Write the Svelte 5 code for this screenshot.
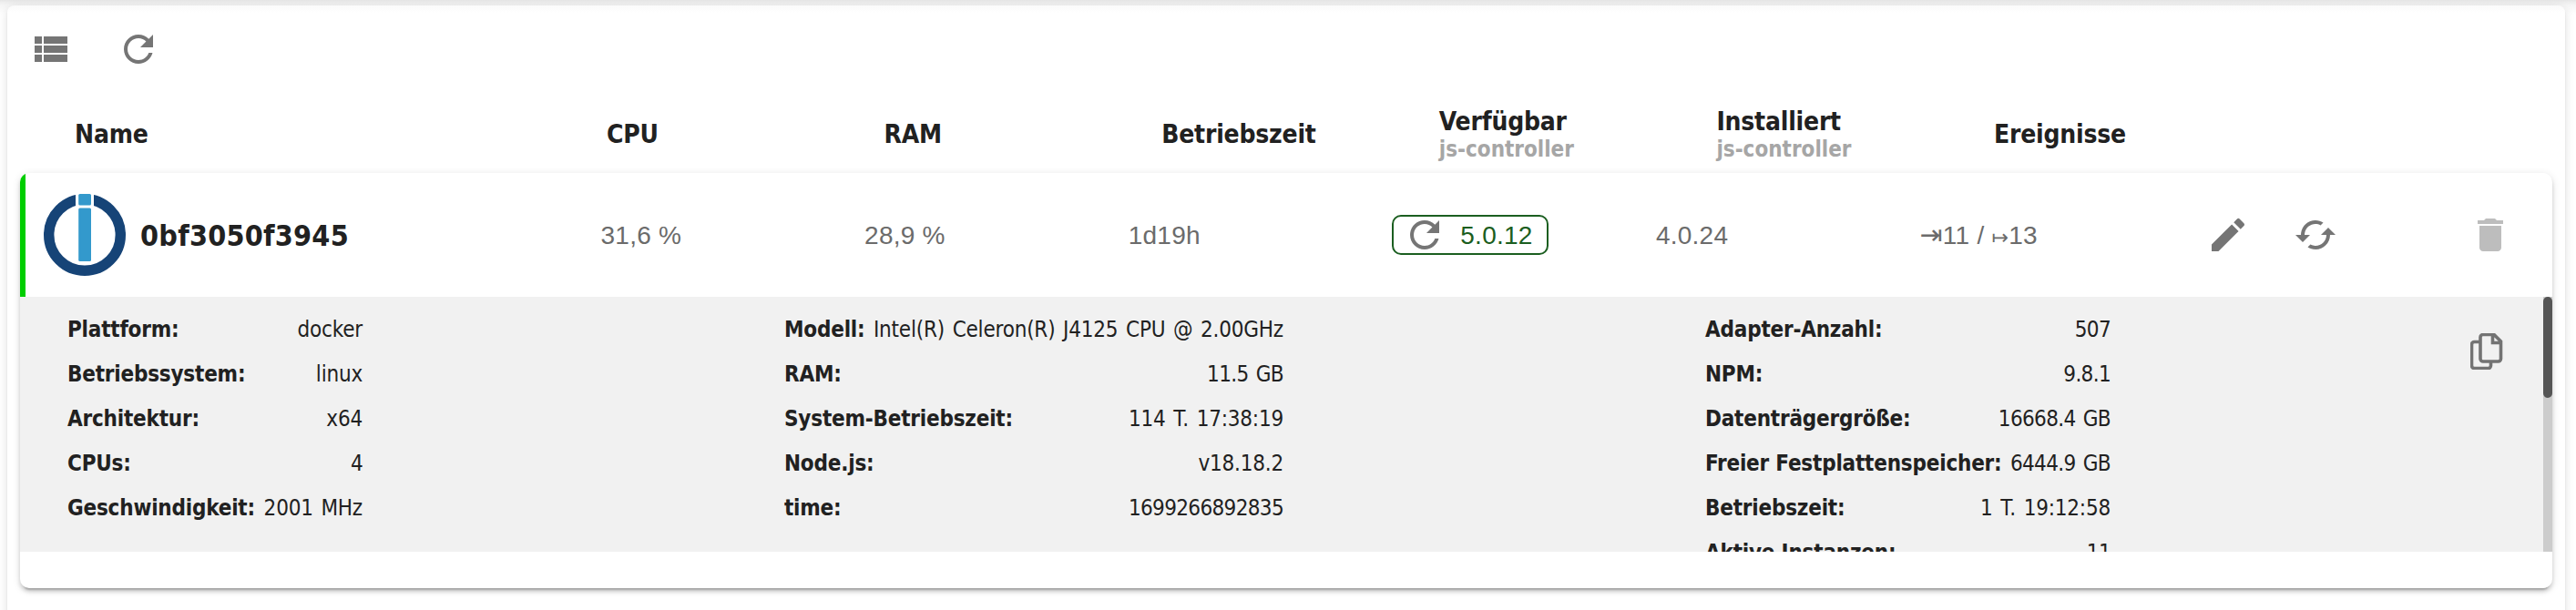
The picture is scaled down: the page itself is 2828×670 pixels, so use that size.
<script>
	const columns = [
		{ title: 'CPU' },
		{ title: 'RAM' },
		{ title: 'Betriebszeit' },
		{ title: 'Verfügbar', sub: 'js-controller' },
		{ title: 'Installiert', sub: 'js-controller' },
		{ title: 'Ereignisse' }
	];

	const host = {
		name: '0bf3050f3945',
		cpu: '31,6 %',
		ram: '28,9 %',
		uptime: '1d19h',
		available: '5.0.12',
		installed: '4.0.24',
		eventsIn: 11,
		eventsOut: 13
	};

	const details = [
		[
			['Plattform', 'docker'],
			['Betriebssystem', 'linux'],
			['Architektur', 'x64'],
			['CPUs', '4'],
			['Geschwindigkeit', '2001 MHz']
		],
		[
			['Modell', 'Intel(R) Celeron(R) J4125 CPU @ 2.00GHz'],
			['RAM', '11.5 GB'],
			['System-Betriebszeit', '114 T. 17:38:19'],
			['Node.js', 'v18.18.2'],
			['time', '1699266892835']
		],
		[
			['Adapter-Anzahl', '507'],
			['NPM', '9.8.1'],
			['Datenträgergröße', '16668.4 GB'],
			['Freier Festplattenspeicher', '6444.9 GB'],
			['Betriebszeit', '1 T. 19:12:58'],
			['Aktive Instanzen', '11']
		]
	];

	const icons = {
		list: 'M3 14h4v-4H3v4zm0 5h4v-4H3v4zM3 9h4V5H3v4zm5 5h13v-4H8v4zm0 5h13v-4H8v4zM8 5v4h13V5H8z',
		refresh:
			'M17.65 6.35C16.2 4.9 14.21 4 12 4c-4.42 0-7.99 3.58-7.99 8s3.57 8 7.99 8c3.73 0 6.84-2.55 7.73-6h-2.08c-.82 2.33-3.04 4-5.65 4-3.31 0-6-2.69-6-6s2.69-6 6-6c1.66 0 3.14.69 4.22 1.78L13 11h7V4l-2.35 2.35z',
		edit: 'M3 17.25V21h3.75L17.81 9.94l-3.75-3.75L3 17.25zM20.71 7.04c.39-.39.39-1.02 0-1.41l-2.34-2.34a.9959.9959 0 0 0-1.41 0l-1.83 1.83 3.75 3.75 1.83-1.83z',
		restart:
			'M19 8l-4 4h3c0 3.31-2.69 6-6 6-1.01 0-1.97-.25-2.8-.7l-1.46 1.46C8.97 19.54 10.43 20 12 20c4.42 0 8-3.58 8-8h3l-4-4zM6 12c0-3.31 2.69-6 6-6 1.01 0 1.97.25 2.8.7l1.46-1.46C15.03 4.46 13.57 4 12 4c-4.42 0-8 3.58-8 8H1l4 4 4-4H6z',
		trash: 'M6 19c0 1.1.9 2 2 2h8c1.1 0 2-.9 2-2V7H6v12zM19 4h-3.5l-1-1h-5l-1 1H5v2h14V4z'
	};

	function isNumeric(v) {
		return /^[\d.]+( GB)?$/.test(v);
	}
</script>

{#snippet icon(name)}
	<svg class="icon" viewBox="0 0 24 24"><path d={icons[name]} /></svg>
{/snippet}

<div class="page">
	<div class="panel">
		<div class="toolbar">
			<button aria-label="list">{@render icon('list')}</button>
			<button aria-label="refresh">{@render icon('refresh')}</button>
		</div>

		<div class="table-head">
			<div class="head-name">Name</div>
			{#each columns as column}
				<div class="head-cell" class:double={column.sub}>
					<div>{column.title}</div>
					{#if column.sub}<div class="sub">{column.sub}</div>{/if}
				</div>
			{/each}
		</div>

		<div class="card">
			<div class="host-row">
				<div class="host-name">
					<svg class="logo" viewBox="0 0 90 90">
						<circle cx="45" cy="45" r="39.3" fill="none" stroke="#164477" stroke-width="11.4" />
						<rect x="35" y="0" width="20" height="20" fill="#fff" />
						<rect x="38.2" y="0" width="13.8" height="12.6" rx="1.5" fill="#3399cc" />
						<rect x="38.2" y="15.4" width="13.8" height="58.6" rx="1.5" fill="#3399cc" />
					</svg>
					<span>{host.name}</span>
				</div>
				<div class="cell">{host.cpu}</div>
				<div class="cell">{host.ram}</div>
				<div class="cell">{host.uptime}</div>
				<div class="cell available">
					<div class="update">{@render icon('refresh')}<span>{host.available}</span></div>
				</div>
				<div class="cell">{host.installed}</div>
				<div class="cell events">
					<span class="in">⇥</span>{host.eventsIn} / <span class="out">↦</span>{host.eventsOut}
				</div>
				<div class="actions">
					<button aria-label="edit">{@render icon('edit')}</button>
					<button aria-label="restart">{@render icon('restart')}</button>
					<button aria-label="delete" class="delete" disabled>{@render icon('trash')}</button>
				</div>
			</div>

			<div class="details">
				{#each details as group}
					<div class="group">
						{#each group as [label, value]}
							<div class="entry">
								<b>{label}:</b>
								<span class:numeric={isNumeric(value)}>{value}</span>
							</div>
						{/each}
					</div>
				{/each}
				<button class="copy" aria-label="copy">
					<svg viewBox="0 0 36 40">
						<path
							d="M11 9.5H4.5a3 3 0 0 0-3 3v23a3 3 0 0 0 3 3h15a3 3 0 0 0 3-3V31M14 1.5h12l7.500 7.500V28a3 3 0 0 1-3 3H14a3 3 0 0 1-3-3V4.500a3 3 0 0 1 3-3zM24.500 2v8.500H33"
						/>
					</svg>
				</button>
				<div class="track"><div class="thumb"></div></div>
			</div>
		</div>
	</div>
</div>

<style>
	:global(body) {
		background: #fff;
		overflow: hidden;
	}

	/* lower edge of the app bar's shadow */
	.page {
		padding-top: 6px;
		background: linear-gradient(#e6e6e6, #ededed 2px, #f6f6f6 6px, #fff 16px);
	}

	.panel {
		box-sizing: border-box;
		height: 690px;
		margin: 0 12px 0 8px;
		padding: 0 14px;
		border-radius: 8px;
		background: linear-gradient(#fafafa, #fff 8px);
		box-shadow:
			0 4px 2px -2px rgba(0, 0, 0, 0.2),
			0 2px 2px 0 rgba(0, 0, 0, 0.1),
			0 2px 12px 0 rgba(0, 0, 0, 0.12);
		color: #212121;
		font-family: 'DejaVu Sans Condensed', 'DejaVu Sans', sans-serif;
		font-stretch: condensed;
	}

	button {
		display: flex;
		padding: 0;
		border: 0;
		background: none;
		color: #757575;
	}

	.icon {
		display: block;
		width: 48px;
		height: 48px;
		fill: currentColor;
	}

	.toolbar {
		display: flex;
		gap: 48px;
		height: 72px;
		padding: 24px 0 0 10px;
		box-sizing: border-box;
	}

	.table-head {
		display: flex;
		align-items: center;
		height: 112px;
		padding-top: 26px;
		padding-left: 60px;
		box-sizing: border-box;
		font-size: 28px;
		font-weight: bold;
		line-height: 31px;
		letter-spacing: -0.2px;
	}

	.head-name {
		width: 584px;
	}

	.head-cell {
		width: 304.6px;
	}

	.head-cell.double {
		padding-top: 4px;
	}

	.sub {
		color: #a6a6a6;
		font-size: 24px;
		line-height: 31px;
		letter-spacing: 0;
	}

	.card {
		height: 456px;
		border-radius: 10px;
		background: #fff;
		box-shadow:
			0 6px 2px -4px rgba(0, 0, 0, 0.2),
			0 4px 4px 0 rgba(0, 0, 0, 0.14),
			0 2px 10px 0 rgba(0, 0, 0, 0.12);
		overflow: hidden;
	}

	.host-row {
		display: flex;
		align-items: center;
		box-sizing: border-box;
		height: 136px;
		border-left: 6px solid #00ce00;
	}

	.host-name {
		display: flex;
		align-items: center;
		gap: 16px;
		width: 611.5px;
		padding-left: 20px;
		font-size: 32px;
		font-weight: bold;
		letter-spacing: 0.25px;
	}

	.host-name span {
		padding-top: 2px;
	}

	.logo {
		width: 90px;
		height: 90px;
	}

	.cell {
		width: 289.6px;
		padding-top: 2px;
		color: #6b6b6b;
		font-family: 'Liberation Sans', Arial, sans-serif;
		font-size: 28px;
		font-stretch: normal;
		line-height: 34px;
		letter-spacing: 0.25px;
		white-space: nowrap;
	}

	.available {
		padding-top: 0;
	}

	.update {
		display: flex;
		align-items: center;
		gap: 15px;
		box-sizing: border-box;
		width: 172px;
		height: 44px;
		padding-left: 10px;
		border: 2px solid #1b5e20;
		border-radius: 10px;
		color: #1b5e20;
	}

	.update span {
		padding-top: 2px;
	}

	.update .icon {
		color: #757575;
	}

	.events .in,
	.events .out {
		font-family: 'DejaVu Sans', sans-serif;
		line-height: 20px;
	}

	.events .in {
		font-size: 30px;
	}

	.events .out {
		font-size: 22px;
	}

	.actions {
		display: flex;
		flex: 1;
		gap: 48px;
		padding-left: 25px;
		padding-right: 44px;
	}

	.delete {
		margin-left: auto;
		color: #bdbdbd;
	}

	.details {
		display: flex;
		height: 280px;
		background: #f1f1f1;
		overflow: hidden;
	}

	.group {
		flex-shrink: 0;
		padding-top: 12px;
	}

	.group:nth-child(1) {
		width: 324px;
		margin-left: 52px;
	}

	.group:nth-child(2) {
		width: 548px;
		margin-left: 463px;
	}

	.group:nth-child(3) {
		width: 445px;
		margin-left: 463px;
	}

	.entry {
		display: flex;
		justify-content: space-between;
		height: 49px;
		font-size: 24px;
		line-height: 48px;
		letter-spacing: -0.2px;
		white-space: nowrap;
	}

	.entry span {
		letter-spacing: -0.2px;
		word-spacing: 2px;
	}

	.entry .numeric {
		letter-spacing: -0.65px;
	}

	.copy {
		align-self: flex-start;
		margin: 40px 0 0 395px;
	}

	.copy svg {
		width: 36px;
		height: 40px;
		fill: none;
		stroke: #737373;
		stroke-width: 3.6;
	}

	.track {
		width: 10px;
		height: 280px;
		margin-left: auto;
		background: #ccc;
	}

	.thumb {
		height: 111px;
		border-radius: 5px;
		background: #555;
	}
</style>
